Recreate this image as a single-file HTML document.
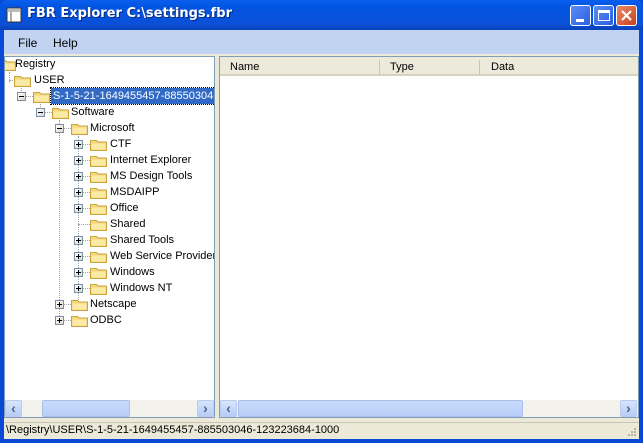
<!DOCTYPE html>
<html><head><style>
*{margin:0;padding:0;box-sizing:border-box}
body{width:643px;height:443px;position:relative;overflow:hidden;font-family:"Liberation Sans",sans-serif;font-size:11px;background:#0a48d6}
.title{position:absolute;left:0;top:0;width:643px;height:30px;background:linear-gradient(#0a5fee,#0255e2 20%,#0a50d8 80%,#0842b8);border-radius:7px 7px 0 0}
.title .t{position:absolute;left:27px;top:6px;color:#fff;font-weight:bold;font-size:13px;font-family:"DejaVu Sans",sans-serif;text-shadow:1px 1px #0a2a80}
.btn{position:absolute;top:5px;width:21px;height:21px;border:1px solid #fff;border-radius:3px;background:linear-gradient(135deg,#5a8cf6,#2a5fe0)}
.win{position:absolute;left:4px;top:30px;width:635px;height:409px;background:#ece9d8}
.menu{position:absolute;left:0;top:0;width:635px;height:24px;background:#c1d3f1;font-size:12px}
.menu span{position:absolute;top:6px}
.pane{position:absolute;background:#fff;border:1px solid #7f9db9}
.row{position:absolute;height:16px;white-space:nowrap;font-size:11px;line-height:16px}
.exp{position:absolute;width:9px;height:9px;border:1px solid #7a8fa6;background:linear-gradient(135deg,#fff,#d8d8cf)}
.exp:before{content:"";position:absolute;left:1px;top:3px;width:5px;height:1px;background:#000}
.exp.p:after{content:"";position:absolute;left:3px;top:1px;width:1px;height:5px;background:#000}
.fd{position:absolute;width:17px;height:13px}
.sb{position:absolute;height:17px;background:#f3f2ec}
.ar{position:absolute;top:0;width:17px;height:17px;border-radius:2px;background:linear-gradient(#d8e4fb,#b6cdf6);border:1px solid #b9ccf0;font-size:14px;color:#4d6185;text-align:center;line-height:14px;font-weight:bold}
.th{position:absolute;top:0;height:17px;border-radius:2px;background:linear-gradient(#cadbfc,#b8cef8);border:1px solid #a9c0ec}
.vl{position:absolute;border-left:1px dotted #a0a0a0}
.hl{position:absolute;border-top:1px dotted #a0a0a0;height:0}
</style></head><body>
<div class="title">
<svg style="position:absolute;left:6px;top:7px" width="16" height="16"><rect x="1" y="1" width="14" height="14" fill="#fff" stroke="#333"/><rect x="2" y="2" width="12" height="3" fill="#bbb"/><line x1="5" y1="5" x2="5" y2="15" stroke="#555"/></svg>
<div class="t">FBR Explorer C:\settings.fbr</div>
<div class="btn" style="left:570px"><div style="position:absolute;left:5px;top:13px;width:8px;height:3px;background:#fff"></div></div>
<div class="btn" style="left:593px"><div style="position:absolute;left:4px;top:4px;width:12px;height:11px;border:1px solid #fff;border-top-width:3px"></div></div>
<div class="btn" style="left:616px;background:linear-gradient(135deg,#e88a6a,#c8401c)"><svg width="19" height="19"><path d="M5 5L14 14M14 5L5 14" stroke="#fff" stroke-width="2.2"/></svg></div>
</div>
<div class="win">
<div class="menu"><span style="left:14px">File</span><span style="left:49px">Help</span></div>
<div class="pane" style="left:0;top:26px;width:211px;height:362px;overflow:hidden">
<svg width="0" height="0" style="position:absolute"><defs><g id="f"><path d="M0.5 2.5h6l1.5 1.5h8.5v8.5h-16z" fill="#f3d77a" stroke="#c8a43c"/><path d="M1.5 5.5h14v6h-14z" fill="#fbeaa6"/></g></defs></svg>
</div>
<div style="position:absolute;left:215px;top:26px;width:420px;height:362px;background:#fff;border:1px solid #7f9db9">
<div style="position:absolute;left:0;top:0;width:418px;height:19px;background:#ebeadb;border-bottom:2px solid #d6d2c2;font-size:11px">
<span style="position:absolute;left:10px;top:4px">Name</span>
<div style="position:absolute;left:159px;top:3px;height:14px;border-left:1px solid #c7c5b2"></div>
<span style="position:absolute;left:170px;top:4px">Type</span>
<div style="position:absolute;left:259px;top:3px;height:14px;border-left:1px solid #c7c5b2"></div>
<span style="position:absolute;left:271px;top:4px">Data</span>
</div>
</div>
<div class="sb" style="left:1px;top:370px;width:209px"><div class="ar" style="left:0">&lsaquo;</div><div class="th" style="left:37px;width:88px"></div><div class="ar" style="left:192px">&rsaquo;</div></div>
<div class="sb" style="left:216px;top:370px;width:418px"><div class="ar" style="left:0">&lsaquo;</div><div class="th" style="left:18px;width:285px"></div><div class="ar" style="left:400px">&rsaquo;</div></div>
<div style="position:absolute;left:0;top:392px;width:635px;height:1px;background:#c8c5b4"></div>
<div style="position:absolute;left:2px;top:394px;font-size:11px">\Registry\USER\S-1-5-21-1649455457-885503046-123223684-1000</div>
</div>
<div style="position:absolute;left:5px;top:58px;width:209px;height:341px;overflow:hidden">
<div class="vl" style="left:4px;top:14px;height:10px"></div><div class="hl" style="left:4px;top:22px;width:8px"></div>
<div class="vl" style="left:16px;top:30px;height:9px"></div>
<div class="vl" style="left:35px;top:46px;height:9px"></div>
<div class="vl" style="left:54px;top:62px;height:204px"></div>
<div class="vl" style="left:73px;top:78px;height:172px"></div>
<svg class="fd" style="left:-6px;top:0px"><use href="#f"/></svg><div class="row" style="left:10px;top:-2px">Registry</div>
<svg class="fd" style="left:9px;top:16px"><use href="#f"/></svg><div class="row" style="left:29px;top:14px">USER</div>
<div class="exp" style="left:12px;top:34px"></div><div class="hl" style="left:21px;top:38px;width:7px"></div><svg class="fd" style="left:28px;top:32px"><use href="#f"/></svg>
<div class="row" style="left:46px;top:30px;background:#316ac5;color:#fff;padding:0 2px;outline:1px dotted #000;width:170px">S-1-5-21-1649455457-885503046-123223684-1000</div>
<div class="exp" style="left:31px;top:50px"></div><div class="hl" style="left:40px;top:54px;width:7px"></div><svg class="fd" style="left:47px;top:48px"><use href="#f"/></svg><div class="row" style="left:66px;top:46px">Software</div>
<div class="exp" style="left:50px;top:66px"></div><div class="hl" style="left:59px;top:70px;width:7px"></div><svg class="fd" style="left:66px;top:64px"><use href="#f"/></svg><div class="row" style="left:85px;top:62px">Microsoft</div>
<div class="exp p" style="left:69px;top:82px"></div><div class="hl" style="left:78px;top:86px;width:7px"></div><svg class="fd" style="left:85px;top:80px"><use href="#f"/></svg><div class="row" style="left:105px;top:78px">CTF</div>
<div class="exp p" style="left:69px;top:98px"></div><div class="hl" style="left:78px;top:102px;width:7px"></div><svg class="fd" style="left:85px;top:96px"><use href="#f"/></svg><div class="row" style="left:105px;top:94px">Internet Explorer</div>
<div class="exp p" style="left:69px;top:114px"></div><div class="hl" style="left:78px;top:118px;width:7px"></div><svg class="fd" style="left:85px;top:112px"><use href="#f"/></svg><div class="row" style="left:105px;top:110px">MS Design Tools</div>
<div class="exp p" style="left:69px;top:130px"></div><div class="hl" style="left:78px;top:134px;width:7px"></div><svg class="fd" style="left:85px;top:128px"><use href="#f"/></svg><div class="row" style="left:105px;top:126px">MSDAIPP</div>
<div class="exp p" style="left:69px;top:146px"></div><div class="hl" style="left:78px;top:150px;width:7px"></div><svg class="fd" style="left:85px;top:144px"><use href="#f"/></svg><div class="row" style="left:105px;top:142px">Office</div>
<div class="hl" style="left:73px;top:166px;width:12px"></div><svg class="fd" style="left:85px;top:160px"><use href="#f"/></svg><div class="row" style="left:105px;top:158px">Shared</div>
<div class="exp p" style="left:69px;top:178px"></div><div class="hl" style="left:78px;top:182px;width:7px"></div><svg class="fd" style="left:85px;top:176px"><use href="#f"/></svg><div class="row" style="left:105px;top:174px">Shared Tools</div>
<div class="exp p" style="left:69px;top:194px"></div><div class="hl" style="left:78px;top:198px;width:7px"></div><svg class="fd" style="left:85px;top:192px"><use href="#f"/></svg><div class="row" style="left:105px;top:190px">Web Service Providers</div>
<div class="exp p" style="left:69px;top:210px"></div><div class="hl" style="left:78px;top:214px;width:7px"></div><svg class="fd" style="left:85px;top:208px"><use href="#f"/></svg><div class="row" style="left:105px;top:206px">Windows</div>
<div class="exp p" style="left:69px;top:226px"></div><div class="hl" style="left:78px;top:230px;width:7px"></div><svg class="fd" style="left:85px;top:224px"><use href="#f"/></svg><div class="row" style="left:105px;top:222px">Windows NT</div>
<div class="exp p" style="left:50px;top:242px"></div><div class="hl" style="left:59px;top:246px;width:7px"></div><svg class="fd" style="left:66px;top:240px"><use href="#f"/></svg><div class="row" style="left:85px;top:238px">Netscape</div>
<div class="exp p" style="left:50px;top:258px"></div><div class="hl" style="left:59px;top:262px;width:7px"></div><svg class="fd" style="left:66px;top:256px"><use href="#f"/></svg><div class="row" style="left:85px;top:254px">ODBC</div>
</div>
<svg style="position:absolute;left:627px;top:427px" width="10" height="10"><g fill="#b8b4a2"><rect x="7" y="1" width="2" height="2"/><rect x="4" y="4" width="2" height="2"/><rect x="7" y="4" width="2" height="2"/><rect x="1" y="7" width="2" height="2"/><rect x="4" y="7" width="2" height="2"/><rect x="7" y="7" width="2" height="2"/></g></svg>
</body></html>
